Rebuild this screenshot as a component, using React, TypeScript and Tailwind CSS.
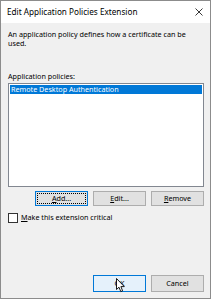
import React from "react";

const font = { fontFamily: '"Noto Sans", "Open Sans", "Liberation Sans", sans-serif' };

function Btn({ children, className = "" }: { children: React.ReactNode; className?: string }) {
  return (
    <div
      className={`w-[53px] flex items-center justify-center border border-[#adadad] bg-[#e1e1e1] text-[7.2px] leading-none text-black ${className}`}
    >
      {children}
    </div>
  );
}

export default function App() {
  return (
    <div className="w-[212px] h-[300px] bg-white" style={font}>
      <div className="w-[211px] h-[299px] border border-[#8c8c8c] bg-[#f0f0f0] flex flex-col">
        <div className="h-[22px] bg-white flex items-center justify-between pl-[6px] pr-[6px]">
          <span className="text-[8.2px] leading-none text-black">Edit Application Policies Extension</span>
          <svg width="8" height="8" viewBox="0 0 8 8" className="mr-[1px]">
            <path d="M0.5 0.5 L7.5 7.5 M7.5 0.5 L0.5 7.5" stroke="#222" strokeWidth="0.9" />
          </svg>
        </div>
        <div className="flex-1 flex flex-col px-[7px] pt-[7px]">
          <p className="text-[7.2px] leading-[9px] text-black">
            An application policy defines how a certificate can be used.
          </p>
          <div className="mt-[24px] text-[7.2px] leading-[9px] text-black">Application policies:</div>
          <div className="mt-[2px] w-[196px] h-[104px] border border-[#828790] bg-white p-[1px]">
            <div className="h-[9px] bg-[#0078d7] text-white text-[7.2px] leading-[9px] pl-[1px]">
              Remote Desktop Authentication
            </div>
          </div>
          <div className="mt-[4px] w-[196px] flex justify-end gap-[5px]">
            <div className="w-[53px] h-[15px] border border-[#0078d7] bg-[#e1e1e1] p-[1px]">
              <div className="w-full h-full border border-dotted border-black flex items-center justify-center text-[7.2px] leading-none text-black">
                <span><span className="underline">A</span>dd...</span>
              </div>
            </div>
            <Btn className="h-[15px]"><span><span className="underline">E</span>dit...</span></Btn>
            <Btn className="h-[15px]"><span><span className="underline">R</span>emove</span></Btn>
          </div>
          <div className="mt-[7px] flex items-center gap-[3px]">
            <div className="w-[10px] h-[10px] border border-[#333] bg-white" />
            <span className="text-[7.2px] leading-none text-black">
              <span className="underline">M</span>ake this extension critical
            </span>
          </div>
          <div className="mt-[52px] w-[196px] flex justify-end gap-[5px]">
            <div className="relative w-[53px] h-[17px] border border-[#0078d7] bg-[#e5f1fb] flex items-center justify-center text-[7.2px] leading-none text-black">
              OK
              <svg
                className="absolute left-[22px] top-[2px]"
                width="10"
                height="15"
                viewBox="0 0 10 15"
              >
                <path
                  d="M0.5 0.5 L0.5 11.5 L3 9.2 L4.8 13.6 L6.6 12.8 L4.9 8.6 L8.3 8.6 Z"
                  fill="white"
                  stroke="black"
                  strokeWidth="0.9"
                  strokeLinejoin="round"
                />
              </svg>
            </div>
            <Btn className="h-[17px]">Cancel</Btn>
          </div>
        </div>
      </div>
    </div>
  );
}
